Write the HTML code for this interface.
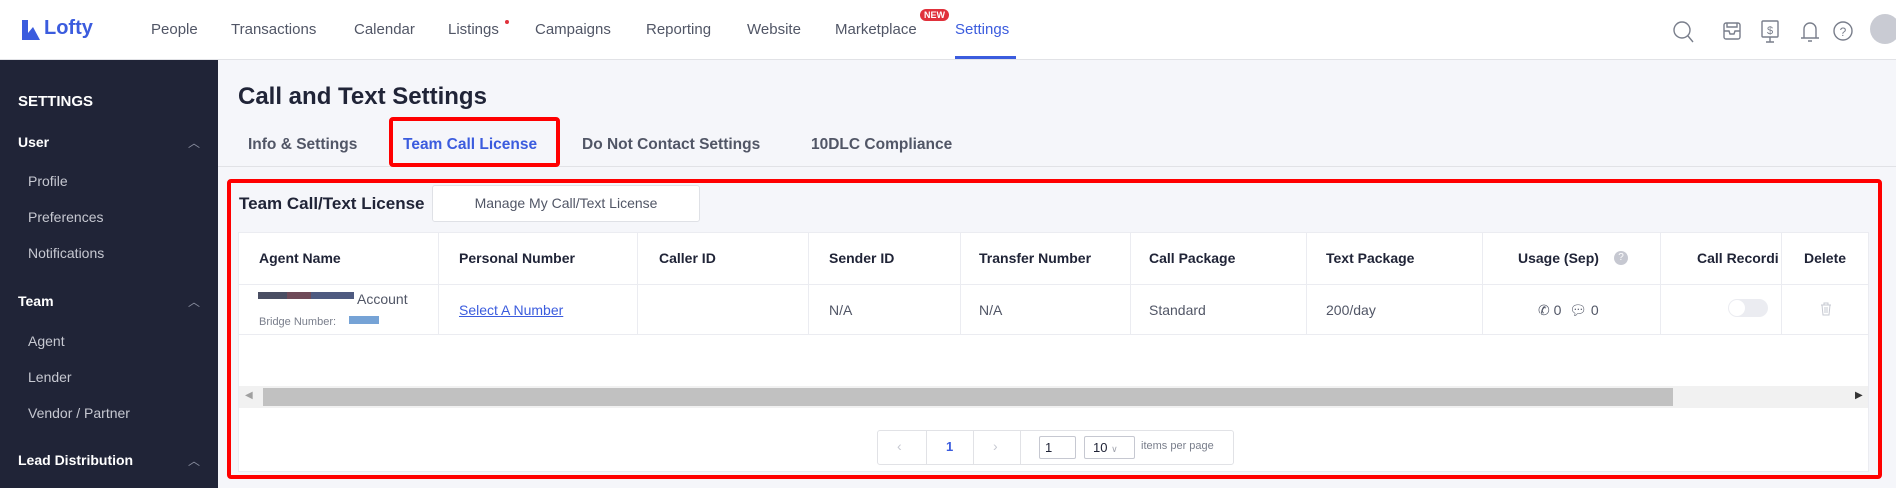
<!DOCTYPE html>
<html><head><meta charset="utf-8"><style>
*{box-sizing:border-box;margin:0;padding:0}
body{width:1896px;height:488px;overflow:hidden;font-family:"Liberation Sans",sans-serif;background:#f5f6fa;position:relative;color:#202437}
.a{position:absolute;white-space:nowrap}
.hdr{left:0;top:0;width:1896px;height:60px;background:#fff;border-bottom:1px solid #e1e2e6}
.nav{top:21px;font-size:15px;color:#515666}
.side{left:0;top:60px;width:218px;height:428px;background:#202437}
.sh{color:#fff;font-weight:bold;font-size:15px}
.si{color:#c6c8d1;font-size:14px;left:28px}
.car{left:188px;color:#8a8fa0;font-size:12px}
.tab{top:136px;font-size:15.5px;font-weight:bold;color:#515666}
.th{top:250px;font-size:14px;font-weight:bold;color:#202437}
.td{top:302px;font-size:14px;color:#515666}
.vl{width:1px;background:#ebecf1;top:232px;height:102px}
</style></head><body>
<div class="a hdr"></div>
<svg class="a" style="left:20px;top:18px" width="22" height="24" viewBox="0 0 22 24"><path d="M2 2 L8 2 L8 15 L13 9 L20 22 L2 22 Z" fill="#3b5cde"/></svg>
<div class="a" style="left:44px;top:17px;font-size:20px;font-weight:bold;color:#3b5cde">Lofty</div>
<div class="a nav" style="left:151px">People</div>
<div class="a nav" style="left:231px">Transactions</div>
<div class="a nav" style="left:354px">Calendar</div>
<div class="a nav" style="left:448px">Listings</div>
<div class="a" style="left:505px;top:20px;width:4px;height:4px;border-radius:2px;background:#e0313b"></div>
<div class="a nav" style="left:535px">Campaigns</div>
<div class="a nav" style="left:646px">Reporting</div>
<div class="a nav" style="left:747px">Website</div>
<div class="a nav" style="left:835px">Marketplace</div>
<div class="a" style="left:920px;top:9px;background:#e0313b;color:#fff;font-size:9px;font-weight:bold;border-radius:8px;padding:1px 4px">NEW</div>
<div class="a nav" style="left:955px;color:#3b5cde">Settings</div>
<div class="a" style="left:955px;top:56px;width:61px;height:3px;background:#3b5cde"></div>
<svg class="a" style="left:1670px;top:18px" width="220" height="26" viewBox="0 0 220 26" fill="none" stroke="#797e8b" stroke-width="1.4">
<circle cx="12" cy="12" r="8"/><path d="M18 18 L23 24"/>
<rect x="54" y="5" width="16" height="16" rx="2"/><path d="M54 13 H59 L60 16 H64 L65 13 H70 M57 5 V9 H67 V5"/>
<rect x="92" y="3" width="16" height="16" rx="1"/><path d="M100 19 V24 M96 24 H104"/><text x="100" y="16" font-size="11" fill="#797e8b" stroke="none" text-anchor="middle" font-family="Liberation Sans">$</text>
<path d="M134 20 V11 A6 6 0 0 1 146 11 V20 Z M131 20 H149 M138 23 H142"/>
<circle cx="173" cy="13" r="9"/><text x="173" y="18" font-size="12" fill="#797e8b" stroke="none" text-anchor="middle" font-family="Liberation Sans">?</text>
</svg>
<div class="a" style="left:1870px;top:14px;width:30px;height:30px;border-radius:15px;background:#c9cbd3"></div>
<div class="a side"></div>
<div class="a sh" style="left:18px;top:93px">SETTINGS</div>
<div class="a sh" style="left:18px;top:134px;font-size:14px">User</div><div class="a car" style="top:134px">︿</div>
<div class="a si" style="top:173px">Profile</div>
<div class="a si" style="top:209px">Preferences</div>
<div class="a si" style="top:245px">Notifications</div>
<div class="a sh" style="left:18px;top:293px;font-size:14px">Team</div><div class="a car" style="top:293px">︿</div>
<div class="a si" style="top:333px">Agent</div>
<div class="a si" style="top:369px">Lender</div>
<div class="a si" style="top:405px">Vendor / Partner</div>
<div class="a sh" style="left:18px;top:452px;font-size:14px">Lead Distribution</div><div class="a car" style="top:452px">︿</div>
<div class="a" style="left:238px;top:83px;font-size:24px;font-weight:bold">Call and Text Settings</div>
<div class="a" style="left:218px;top:166px;width:1678px;height:1px;background:#e1e2e6"></div>
<div class="a tab" style="left:248px">Info &amp; Settings</div>
<div class="a tab" style="left:403px;color:#3b5cde">Team Call License</div>
<div class="a tab" style="left:582px">Do Not Contact Settings</div>
<div class="a tab" style="left:811px">10DLC Compliance</div>
<div class="a" style="left:389px;top:117px;width:171px;height:50px;border:4px solid #f00;border-radius:4px"></div>
<div class="a" style="left:229px;top:181px;width:1651px;height:296px;background:#f5f6fa"></div>
<div class="a" style="left:239px;top:194px;font-size:17px;font-weight:bold">Team Call/Text License</div>
<div class="a" style="left:432px;top:185px;width:268px;height:37px;background:#fff;border:1px solid #dfe1e6;border-radius:3px;font-size:14px;color:#515666;text-align:center;line-height:35px">Manage My Call/Text License</div>
<div class="a" style="left:238px;top:232px;width:1631px;height:240px;background:#fff;border:1px solid #ebecf1"></div>
<div class="a" style="left:238px;top:284px;width:1631px;height:1px;background:#ebecf1"></div>
<div class="a" style="left:238px;top:334px;width:1631px;height:1px;background:#ebecf1"></div>
<div class="a vl" style="left:438px"></div><div class="a vl" style="left:637px"></div><div class="a vl" style="left:808px"></div><div class="a vl" style="left:960px"></div><div class="a vl" style="left:1130px"></div><div class="a vl" style="left:1306px"></div><div class="a vl" style="left:1482px"></div><div class="a vl" style="left:1660px"></div><div class="a vl" style="left:1781px"></div>
<div class="a th" style="left:259px">Agent Name</div>
<div class="a th" style="left:459px">Personal Number</div>
<div class="a th" style="left:659px">Caller ID</div>
<div class="a th" style="left:829px">Sender ID</div>
<div class="a th" style="left:979px">Transfer Number</div>
<div class="a th" style="left:1149px">Call Package</div>
<div class="a th" style="left:1326px">Text Package</div>
<div class="a th" style="left:1518px">Usage (Sep)</div>
<div class="a" style="left:1614px;top:251px;width:14px;height:14px;border-radius:7px;background:#c6c8d1;color:#fff;font-size:10px;text-align:center;line-height:14px">?</div>
<div class="a th" style="left:1697px;width:82px;overflow:hidden">Call Recording</div>
<div class="a th" style="left:1804px">Delete</div>
<div class="a" style="left:258px;top:292px;width:96px;height:7px;background:linear-gradient(90deg,#4a4e63 0 30%,#6e4a58 30% 55%,#4e5a80 55% 100%)"></div>
<div class="a" style="left:357px;top:291px;font-size:14px;color:#515666">Account</div>
<div class="a" style="left:259px;top:316px;font-size:11px;color:#797e8b">Bridge Number:</div>
<div class="a" style="left:349px;top:316px;width:30px;height:8px;background:#76a3d6"></div>
<div class="a td" style="left:459px;color:#3b5cde;text-decoration:underline">Select A Number</div>
<div class="a td" style="left:829px">N/A</div>
<div class="a td" style="left:979px">N/A</div>
<div class="a td" style="left:1149px">Standard</div>
<div class="a td" style="left:1326px">200/day</div>
<div class="a td" style="left:1538px">✆ 0 &nbsp;💬︎ 0</div>
<div class="a" style="left:1728px;top:299px;width:40px;height:18px;border-radius:9px;background:#ebecf1"><div style="width:16px;height:16px;margin:1px;border-radius:8px;background:#fff"></div></div>
<svg class="a" style="left:1820px;top:302px" width="12" height="14" viewBox="0 0 12 14" fill="none" stroke="#c6c8d1"><path d="M1 3H11M4 3V1H8V3M2 3L3 13H9L10 3M5 5V11M7 5V11"/></svg>
<div class="a" style="left:239px;top:386px;width:1629px;height:22px;background:#f1f1f1"></div>
<div class="a" style="left:263px;top:388px;width:1410px;height:18px;background:#c1c1c1"></div>
<div class="a" style="left:245px;top:390px;font-size:10px;color:#a0a0a0">◀</div>
<div class="a" style="left:1855px;top:390px;font-size:10px;color:#333">▶</div>
<div class="a" style="left:877px;top:430px;width:357px;height:35px;border:1px solid #e1e2e6;border-radius:3px;background:#fff"></div>
<div class="a" style="left:926px;top:430px;width:1px;height:35px;background:#e1e2e6"></div>
<div class="a" style="left:973px;top:430px;width:1px;height:35px;background:#e1e2e6"></div>
<div class="a" style="left:1020px;top:430px;width:1px;height:35px;background:#e1e2e6"></div>
<div class="a" style="left:897px;top:438px;font-size:14px;color:#c6c8d1">‹</div>
<div class="a" style="left:946px;top:439px;font-size:13px;color:#3b5cde;font-weight:bold">1</div>
<div class="a" style="left:993px;top:438px;font-size:14px;color:#c6c8d1">›</div>
<div class="a" style="left:1039px;top:436px;width:37px;height:23px;border:1px solid #c6c8d1;border-radius:2px;font-size:13px;padding:3px 5px">1</div>
<div class="a" style="left:1084px;top:436px;width:51px;height:23px;border:1px solid #c6c8d1;border-radius:2px;font-size:13px;padding:3px 8px">10 <span style="font-size:9px;color:#a0a3ad">∨</span></div>
<div class="a" style="left:1141px;top:440px;font-size:11px;color:#797e8b">items per page</div>
<div class="a" style="left:227px;top:179px;width:1655px;height:300px;border:4px solid #f00;border-radius:4px"></div>
</body></html>
